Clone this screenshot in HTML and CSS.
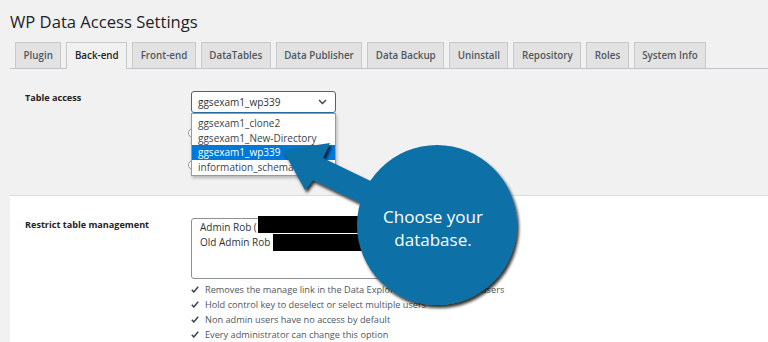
FILE: index.html
```html
<!DOCTYPE html>
<html lang="en">
<head>
<meta charset="utf-8">
<title>WP Data Access Settings</title>
<link rel="stylesheet" href="styles.css">
</head>
<body>
<div class="wrap">
  <h1 class="title">WP Data Access Settings</h1>
  <nav class="tabs">
    <span class="tab">Plugin</span>
    <span class="tab active">Back-end</span>
    <span class="tab">Front-end</span>
    <span class="tab">DataTables</span>
    <span class="tab">Data Publisher</span>
    <span class="tab">Data Backup</span>
    <span class="tab">Uninstall</span>
    <span class="tab">Repository</span>
    <span class="tab">Roles</span>
    <span class="tab">System Info</span>
  </nav>

  <div class="row row-first">
    <div class="label">Table access</div>
    <div class="field">
      <div class="select">
        <span>ggsexam1_wp339</span>
        <svg class="chev" width="9" height="6" viewBox="0 0 9 6"><path d="M1 1l3.5 3.5L8 1" fill="none" stroke="#3c434a" stroke-width="1.4"/></svg>
      </div>
      <div class="radios">
        <span class="radio"></span>
        <span class="radio"></span>
      </div>
      <ul class="dropdown">
        <li>ggsexam1_clone2</li>
        <li>ggsexam1_New-Directory</li>
        <li class="sel">ggsexam1_wp339</li>
        <li>information_schema</li>
      </ul>
    </div>
  </div>

  <div class="panel">
    <div class="row row-second">
      <div class="label">Restrict table management</div>
      <div class="field">
        <div class="listbox">
          <div class="opt">Admin Rob (</div>
          <div class="opt">Old Admin Rob</div>
          <span class="redact r1"></span>
          <span class="redact r2"></span>
        </div>
        <ul class="checks">
          <li><svg class="tick" width="8" height="7" viewBox="0 0 8 7"><path d="M0.8 3.8l2 2.2L7.2 0.8" fill="none" stroke="#3c434a" stroke-width="1.5"/></svg>Removes the manage link in the Data Explorer for all unselected users</li>
          <li><svg class="tick" width="8" height="7" viewBox="0 0 8 7"><path d="M0.8 3.8l2 2.2L7.2 0.8" fill="none" stroke="#3c434a" stroke-width="1.5"/></svg>Hold control key to deselect or select multiple users</li>
          <li><svg class="tick" width="8" height="7" viewBox="0 0 8 7"><path d="M0.8 3.8l2 2.2L7.2 0.8" fill="none" stroke="#3c434a" stroke-width="1.5"/></svg>Non admin users have no access by default</li>
          <li><svg class="tick" width="8" height="7" viewBox="0 0 8 7"><path d="M0.8 3.8l2 2.2L7.2 0.8" fill="none" stroke="#3c434a" stroke-width="1.5"/></svg>Every administrator can change this option</li>
        </ul>
      </div>
    </div>
  </div>
</div>

<svg class="callout" width="768" height="342" viewBox="0 0 768 342">
  <defs>
    <filter id="shadow" x="-20%" y="-20%" width="140%" height="140%">
      <feDropShadow dx="2" dy="3" stdDeviation="1.4" flood-color="#000" flood-opacity="0.8"/>
    </filter>
  </defs>
  <g filter="url(#shadow)" fill="#0f71a7">
    <polygon points="283,150 330,143 323,158 410,200 400,222 313,180 305,190"/>
    <circle cx="437" cy="225" r="80"/>
  </g>
</svg>
<div class="callout-text">Choose your<br>database.</div>
</body>
</html>
```

FILE: styles.css
```css
* { box-sizing: border-box; }

body {
  margin: 0;
  background: #f1f1f1;
  font-family: "Open Sans", "Noto Sans", sans-serif;
  color: #1d2327;
  width: 768px;
  height: 342px;
  overflow: hidden;
  position: relative;
}

.wrap {
  padding-left: 10px;
}

.title {
  margin: 11px 0 0;
  font-size: 16.6px;
  line-height: 22px;
  font-weight: 400;
  color: #1d2327;
}

.tabs {
  display: flex;
  gap: 5px;
  margin-top: 9px;
  padding-left: 5px;
  height: 27px;
  border-bottom: 1px solid #c3c4c7;
  align-items: flex-start;
}

.tab {
  display: block;
  padding: 0 7.5px;
  height: 26px;
  line-height: 25px;
  font-size: 9.8px;
  font-weight: 600;
  color: #50575e;
  background: #e2e2e2;
  border: 1px solid #c9c9c9;
  border-bottom: none;
}

.tab.active {
  background: #f1f1f1;
  color: #1d2327;
  height: 27px;
  position: relative;
}

.row {
  display: flex;
  padding-left: 15px;
}

.label {
  width: 166px;
  flex: none;
  font-size: 9.1px;
  font-weight: 700;
  line-height: 14px;
  color: #1d2327;
}

.field {
  position: relative;
}

.row-first {
  height: 126px;
  padding-top: 22px;
}

.select {
  width: 145px;
  height: 22px;
  border: 1px solid #2c6c9e;
  border-radius: 3px;
  background: #fff;
  display: flex;
  align-items: center;
  justify-content: space-between;
  padding: 0 8px 0 6px;
  font-size: 10px;
  color: #2c3338;
}

.chev { display: block; }

.radios {
  display: flex;
  flex-direction: column;
  gap: 22px;
  margin: 15px 0 0 -3px;
}

.radio {
  display: block;
  width: 10px;
  height: 10px;
  border: 1px solid #9a9ca0;
  border-radius: 50%;
  background: #fff;
}

.dropdown {
  position: absolute;
  top: 22px;
  left: 0;
  width: 145px;
  margin: 0;
  padding: 2px 0 1px;
  list-style: none;
  background: #fff;
  border: 1px solid #9a9a9a;
  box-shadow: 1px 2px 3px rgba(0,0,0,0.25);
  font-size: 10px;
  color: #3c434a;
}

.dropdown li {
  height: 14.5px;
  line-height: 14.5px;
  padding-left: 6px;
  white-space: nowrap;
}

.dropdown li.sel {
  background: #0078d7;
  color: #fff;
}

.panel {
  background: #fff;
  border-top: 1px solid #dcdcde;
  height: 160px;
}

.row-second {
  padding-top: 22px;
}

.listbox {
  position: relative;
  width: 200px;
  height: 61px;
  border: 1px solid #8c8f94;
  border-radius: 3px;
  padding: 1px 8px;
  font-size: 10px;
  color: #2c3338;
}

.opt {
  line-height: 15px;
  white-space: nowrap;
}

.redact {
  position: absolute;
  background: #000;
}

.r1 { left: 66px; top: -3px; width: 140px; height: 17px; }
.r2 { left: 81px; top: 15px; width: 120px; height: 17px; }

.checks {
  list-style: none;
  margin: 3px 0 0;
  padding: 0;
  font-size: 9.2px;
  color: #50575e;
}

.checks li {
  line-height: 15px;
  white-space: nowrap;
  display: flex;
  align-items: center;
}

.tick {
  display: block;
  margin-right: 6px;
}

.callout {
  position: absolute;
  left: 0;
  top: 0;
  pointer-events: none;
}

.callout-text {
  position: absolute;
  left: 383px;
  top: 205px;
  width: 100px;
  text-align: center;
  color: #fff;
  font-size: 17px;
  line-height: 23px;
  font-family: "Open Sans", "Noto Sans", sans-serif;
}
```
